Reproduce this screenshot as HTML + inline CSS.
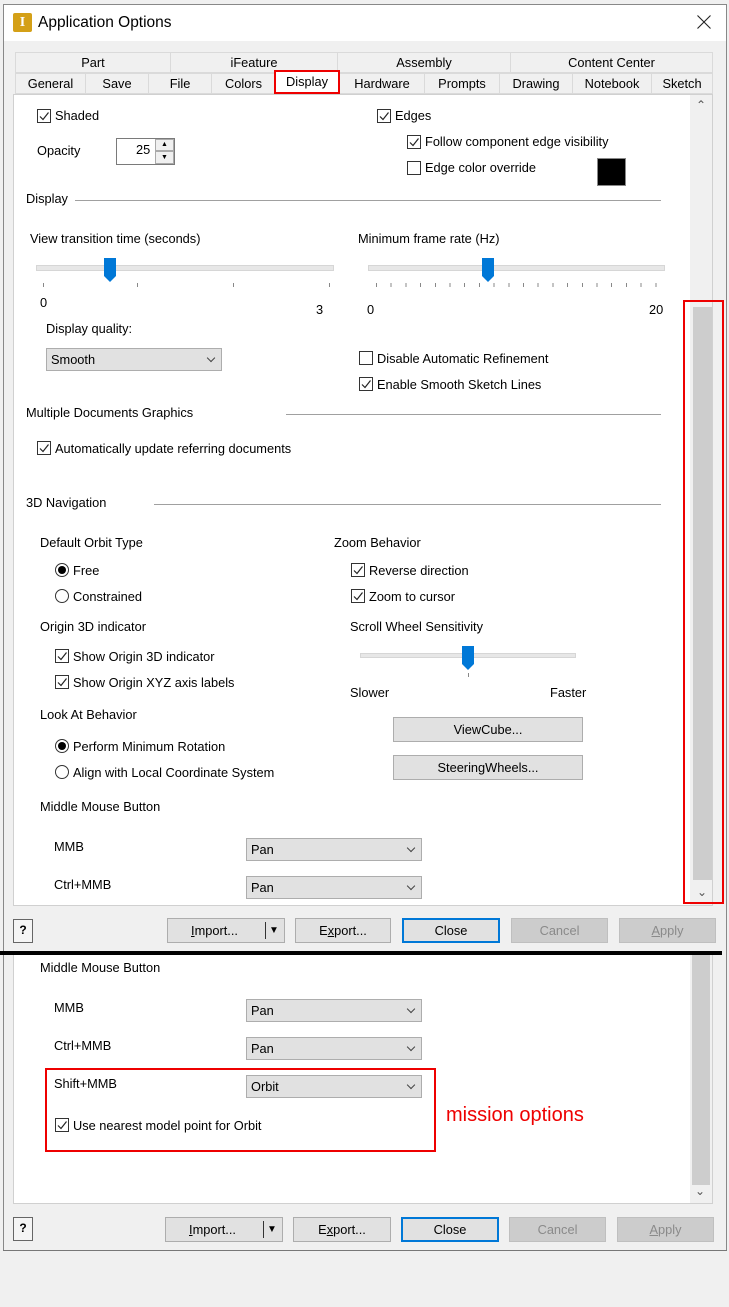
<!DOCTYPE html>
<html><head><meta charset="utf-8"><style>
*{box-sizing:border-box;margin:0;padding:0}
body{width:729px;height:1307px;background:#f0f0f0;position:relative;overflow:hidden;font-family:"Liberation Sans",sans-serif;font-size:12.8px;color:#000}
.a{position:absolute}
.t{position:absolute;white-space:nowrap;line-height:14px}
.cb{position:absolute;width:14px;height:14px;border:1px solid #333;background:#fff}
.cb svg{position:absolute;left:0;top:0}
.rb{position:absolute;width:14px;height:14px;border:1px solid #333;border-radius:50%;background:#fff}
.rb.on::after{content:"";position:absolute;left:2px;top:2px;width:8px;height:8px;border-radius:50%;background:#000}
.dd{position:absolute;background:#e1e1e1;border:1px solid #adadad;height:23px;padding:4px 4px;line-height:14px}
.dd::after{content:"";position:absolute;right:7px;top:6px;width:5px;height:5px;border-right:1px solid #444;border-bottom:1px solid #444;transform:rotate(45deg)}
.btn{position:absolute;background:#e1e1e1;border:1px solid #adadad;height:25px;text-align:center;line-height:23px}
.dis{background:#cccccc;border-color:#bfbfbf;color:#8a8a8a}
.tab{position:absolute;border:1px solid #dadada;background:#f0f0f0;text-align:center;line-height:19px;height:21px}
.line{position:absolute;height:1px;background:#a0a0a0}
.help{position:absolute;width:20px;height:24px;border:1px solid #666;background:#f5f5f5;text-align:center;font-size:12px;line-height:20px;font-weight:bold}
</style></head><body>
<div class="a" style="left:0;top:0;width:729px;height:5px;background:#f0f0f0"></div>
<div class="a" style="left:3px;top:4px;width:724px;height:1247px;background:#f0f0f0;border:1px solid #888"></div>
<div class="a" style="left:4px;top:5px;width:722px;height:36px;background:#fff"></div>
<div class="a" style="left:13px;top:13px;width:19px;height:19px;background:#d4a017;border-radius:2px;color:#fff;font-family:'Liberation Serif',serif;font-weight:bold;font-size:14px;text-align:center;line-height:19px">I</div>
<div class="t" style="left:38px;top:14px;font-size:15.5px;line-height:18px">Application Options</div>
<svg class="a" style="left:697px;top:15px" width="14" height="14"><path d="M0.5 0.5L13.5 13.5M13.5 0.5L0.5 13.5" stroke="#222" stroke-width="1.1"/></svg>

<div class="tab" style="left:15px;top:52px;width:156px">Part</div>
<div class="tab" style="left:170px;top:52px;width:168px">iFeature</div>
<div class="tab" style="left:337px;top:52px;width:174px">Assembly</div>
<div class="tab" style="left:510px;top:52px;width:203px">Content Center</div>
<div class="tab" style="left:15px;top:73px;width:71px">General</div>
<div class="tab" style="left:85px;top:73px;width:64px">Save</div>
<div class="tab" style="left:148px;top:73px;width:64px">File</div>
<div class="tab" style="left:211px;top:73px;width:65px">Colors</div>
<div class="tab" style="left:339px;top:73px;width:86px">Hardware</div>
<div class="tab" style="left:424px;top:73px;width:76px">Prompts</div>
<div class="tab" style="left:499px;top:73px;width:74px">Drawing</div>
<div class="tab" style="left:572px;top:73px;width:80px">Notebook</div>
<div class="tab" style="left:651px;top:73px;width:62px">Sketch</div>

<div class="a" style="left:13px;top:94px;width:700px;height:812px;background:#fff;border:1px solid #d0d0d0"></div>
<div class="a" style="left:274px;top:70px;width:66px;height:24px;background:#fff;border:2px solid #e00;text-align:center;line-height:20px">Display</div>

<div class="a" style="left:690px;top:95px;width:22px;height:810px;background:#f0f0f0"></div>
<div class="t" style="left:696px;top:98px;font-size:12px;color:#555">&#8963;</div>
<div class="a" style="left:693px;top:307px;width:19px;height:573px;background:#cdcdcd"></div>
<div class="t" style="left:697px;top:885px;font-size:12px;color:#555">&#8964;</div>
<div class="a" style="left:683px;top:300px;width:41px;height:604px;border:2px solid #e00"></div>

<div class="t" style="left:55px;top:109px">Shaded</div>
<div class="t" style="left:395px;top:109px">Edges</div>
<div class="t" style="left:37px;top:144px">Opacity</div>
<div class="a" style="left:116px;top:138px;width:59px;height:27px;border:1px solid #7a7a7a;background:#fff"></div>
<div class="t" style="left:136px;top:143px">25</div>
<div class="a" style="left:155px;top:139px;width:19px;height:12px;border:1px solid #aaa;background:#f0f0f0;font-size:7px;text-align:center;line-height:10px">▲</div>
<div class="a" style="left:155px;top:151px;width:19px;height:13px;border:1px solid #aaa;background:#f0f0f0;font-size:7px;text-align:center;line-height:11px">▼</div>
<div class="t" style="left:425px;top:135px">Follow component edge visibility</div>
<div class="t" style="left:425px;top:161px">Edge color override</div>
<div class="a" style="left:597px;top:158px;width:29px;height:28px;background:#000;border:1px solid #888"></div>

<div class="t" style="left:26px;top:192px">Display</div><div class="line" style="left:75px;top:200px;width:586px"></div>
<div class="t" style="left:30px;top:232px">View transition time (seconds)</div>
<div class="t" style="left:358px;top:232px">Minimum frame rate (Hz)</div>
<div class="a" style="left:36px;top:265px;width:298px;height:6px;background:#e7e7e7;border:1px solid #d6d6d6"></div>
<svg class="a" style="left:103px;top:257px" width="14" height="26"><path d="M1 1H13V19L7 25L1 19Z" fill="#0078d7"/></svg>
<div class="a" style="left:43px;top:283px;width:1px;height:4px;background:#888"></div>
<div class="a" style="left:137px;top:283px;width:1px;height:4px;background:#888"></div>
<div class="a" style="left:233px;top:283px;width:1px;height:4px;background:#888"></div>
<div class="a" style="left:329px;top:283px;width:1px;height:4px;background:#888"></div>
<div class="t" style="left:40px;top:296px">0</div><div class="t" style="left:316px;top:303px">3</div>
<div class="a" style="left:368px;top:265px;width:297px;height:6px;background:#e7e7e7;border:1px solid #d6d6d6"></div>
<svg class="a" style="left:481px;top:257px" width="14" height="26"><path d="M1 1H13V19L7 25L1 19Z" fill="#0078d7"/></svg>
<div class="a" style="left:376px;top:283px;width:290px;height:4px;background:repeating-linear-gradient(90deg,#888 0 1px,transparent 1px 14.7px)"></div>
<div class="t" style="left:367px;top:303px">0</div><div class="t" style="left:649px;top:303px">20</div>
<div class="t" style="left:46px;top:322px">Display quality:</div>
<div class="dd" style="left:46px;top:348px;width:176px">Smooth</div>
<div class="t" style="left:377px;top:352px">Disable Automatic Refinement</div>
<div class="t" style="left:377px;top:378px">Enable Smooth Sketch Lines</div>
<div class="t" style="left:26px;top:406px">Multiple Documents Graphics</div><div class="line" style="left:286px;top:414px;width:375px"></div>
<div class="t" style="left:55px;top:442px">Automatically update referring documents</div>
<div class="t" style="left:26px;top:496px">3D Navigation</div><div class="line" style="left:154px;top:504px;width:507px"></div>
<div class="t" style="left:40px;top:536px">Default Orbit Type</div>
<div class="t" style="left:334px;top:536px">Zoom Behavior</div>
<div class="rb on" style="left:55px;top:563px"></div><div class="t" style="left:73px;top:564px">Free</div>
<div class="rb" style="left:55px;top:589px"></div><div class="t" style="left:73px;top:590px">Constrained</div>
<div class="t" style="left:369px;top:564px">Reverse direction</div>
<div class="t" style="left:369px;top:590px">Zoom to cursor</div>
<div class="t" style="left:40px;top:620px">Origin 3D indicator</div>
<div class="t" style="left:350px;top:620px">Scroll Wheel Sensitivity</div>
<div class="t" style="left:73px;top:650px">Show Origin 3D indicator</div>
<div class="t" style="left:73px;top:676px">Show Origin XYZ axis labels</div>
<div class="a" style="left:360px;top:653px;width:216px;height:5px;background:#e7e7e7;border:1px solid #d6d6d6"></div>
<svg class="a" style="left:461px;top:645px" width="14" height="26"><path d="M1 1H13V19L7 25L1 19Z" fill="#0078d7"/></svg>
<div class="a" style="left:468px;top:673px;width:1px;height:4px;background:#888"></div>
<div class="t" style="left:350px;top:686px">Slower</div><div class="t" style="left:550px;top:686px">Faster</div>
<div class="t" style="left:40px;top:708px">Look At Behavior</div>
<div class="btn" style="left:393px;top:717px;width:190px">ViewCube...</div>
<div class="btn" style="left:393px;top:755px;width:190px">SteeringWheels...</div>
<div class="rb on" style="left:55px;top:739px"></div><div class="t" style="left:73px;top:740px">Perform Minimum Rotation</div>
<div class="rb" style="left:55px;top:765px"></div><div class="t" style="left:73px;top:766px">Align with Local Coordinate System</div>
<div class="t" style="left:40px;top:800px">Middle Mouse Button</div>
<div class="t" style="left:54px;top:840px">MMB</div><div class="dd" style="left:246px;top:838px;width:176px">Pan</div>
<div class="t" style="left:54px;top:878px">Ctrl+MMB</div><div class="dd" style="left:246px;top:876px;width:176px">Pan</div>

<div class="help" style="left:13px;top:919px">?</div>
<div class="btn" style="left:167px;top:918px;width:118px;text-align:left;padding-left:23px"><u>I</u>mport...<span class="a" style="left:97px;top:3px;width:1px;height:17px;background:#333"></span><span class="a" style="left:101px;top:0;font-size:10px">▼</span></div>
<div class="btn" style="left:295px;top:918px;width:96px">E<u>x</u>port...</div>
<div class="btn" style="left:402px;top:918px;width:98px;border:2px solid #0078d7;line-height:21px">Close</div>
<div class="btn dis" style="left:511px;top:918px;width:97px">Cancel</div>
<div class="btn dis" style="left:619px;top:918px;width:97px"><u>A</u>pply</div>

<div class="a" style="left:0;top:951px;width:722px;height:4px;background:#000"></div>

<div class="a" style="left:13px;top:955px;width:700px;height:249px;background:#fff;border:1px solid #d0d0d0;border-top:none"></div>
<div class="a" style="left:690px;top:955px;width:22px;height:248px;background:#f0f0f0"></div>
<div class="a" style="left:692px;top:955px;width:18px;height:230px;background:#cdcdcd"></div>
<div class="t" style="left:695px;top:1184px;font-size:12px;color:#555">&#8964;</div>
<div class="t" style="left:40px;top:961px">Middle Mouse Button</div>
<div class="t" style="left:54px;top:1001px">MMB</div><div class="dd" style="left:246px;top:999px;width:176px">Pan</div>
<div class="t" style="left:54px;top:1039px">Ctrl+MMB</div><div class="dd" style="left:246px;top:1037px;width:176px">Pan</div>
<div class="t" style="left:54px;top:1077px">Shift+MMB</div><div class="dd" style="left:246px;top:1075px;width:176px">Orbit</div>
<div class="t" style="left:73px;top:1119px">Use nearest model point for Orbit</div>
<div class="a" style="left:45px;top:1068px;width:391px;height:84px;border:2px solid #e00"></div>
<div class="t" style="left:446px;top:1104px;font-size:20px;line-height:22px;color:#e00">mission options</div>

<div class="help" style="left:13px;top:1217px">?</div>
<div class="btn" style="left:165px;top:1217px;width:118px;text-align:left;padding-left:23px"><u>I</u>mport...<span class="a" style="left:97px;top:3px;width:1px;height:17px;background:#333"></span><span class="a" style="left:101px;top:0;font-size:10px">▼</span></div>
<div class="btn" style="left:293px;top:1217px;width:98px">E<u>x</u>port...</div>
<div class="btn" style="left:401px;top:1217px;width:98px;border:2px solid #0078d7;line-height:21px">Close</div>
<div class="btn dis" style="left:509px;top:1217px;width:97px">Cancel</div>
<div class="btn dis" style="left:617px;top:1217px;width:97px"><u>A</u>pply</div>
<div class="a" style="left:3px;top:1250px;width:724px;height:1px;background:#777"></div>
<div class="a" style="left:0;top:1251px;width:729px;height:56px;background:#f0f0f0"></div>

<div id="cbs"></div>
<script>
var ck='<svg width="12" height="12"><path d="M2 6.5L5 9.5L10.5 2.5" fill="none" stroke="#222" stroke-width="1.2"/></svg>';
var list=[[37,109,1],[377,109,1],[407,135,1],[407,161,0],[359,351,0],[359,377,1],[37,441,1],[351,563,1],[351,589,1],[55,649,1],[55,675,1],[55,1118,1]];
var h='';list.forEach(function(c){h+='<div class="cb" style="left:'+c[0]+'px;top:'+c[1]+'px">'+(c[2]?ck:'')+'</div>'});
document.getElementById('cbs').innerHTML=h;
</script>
</body></html>
